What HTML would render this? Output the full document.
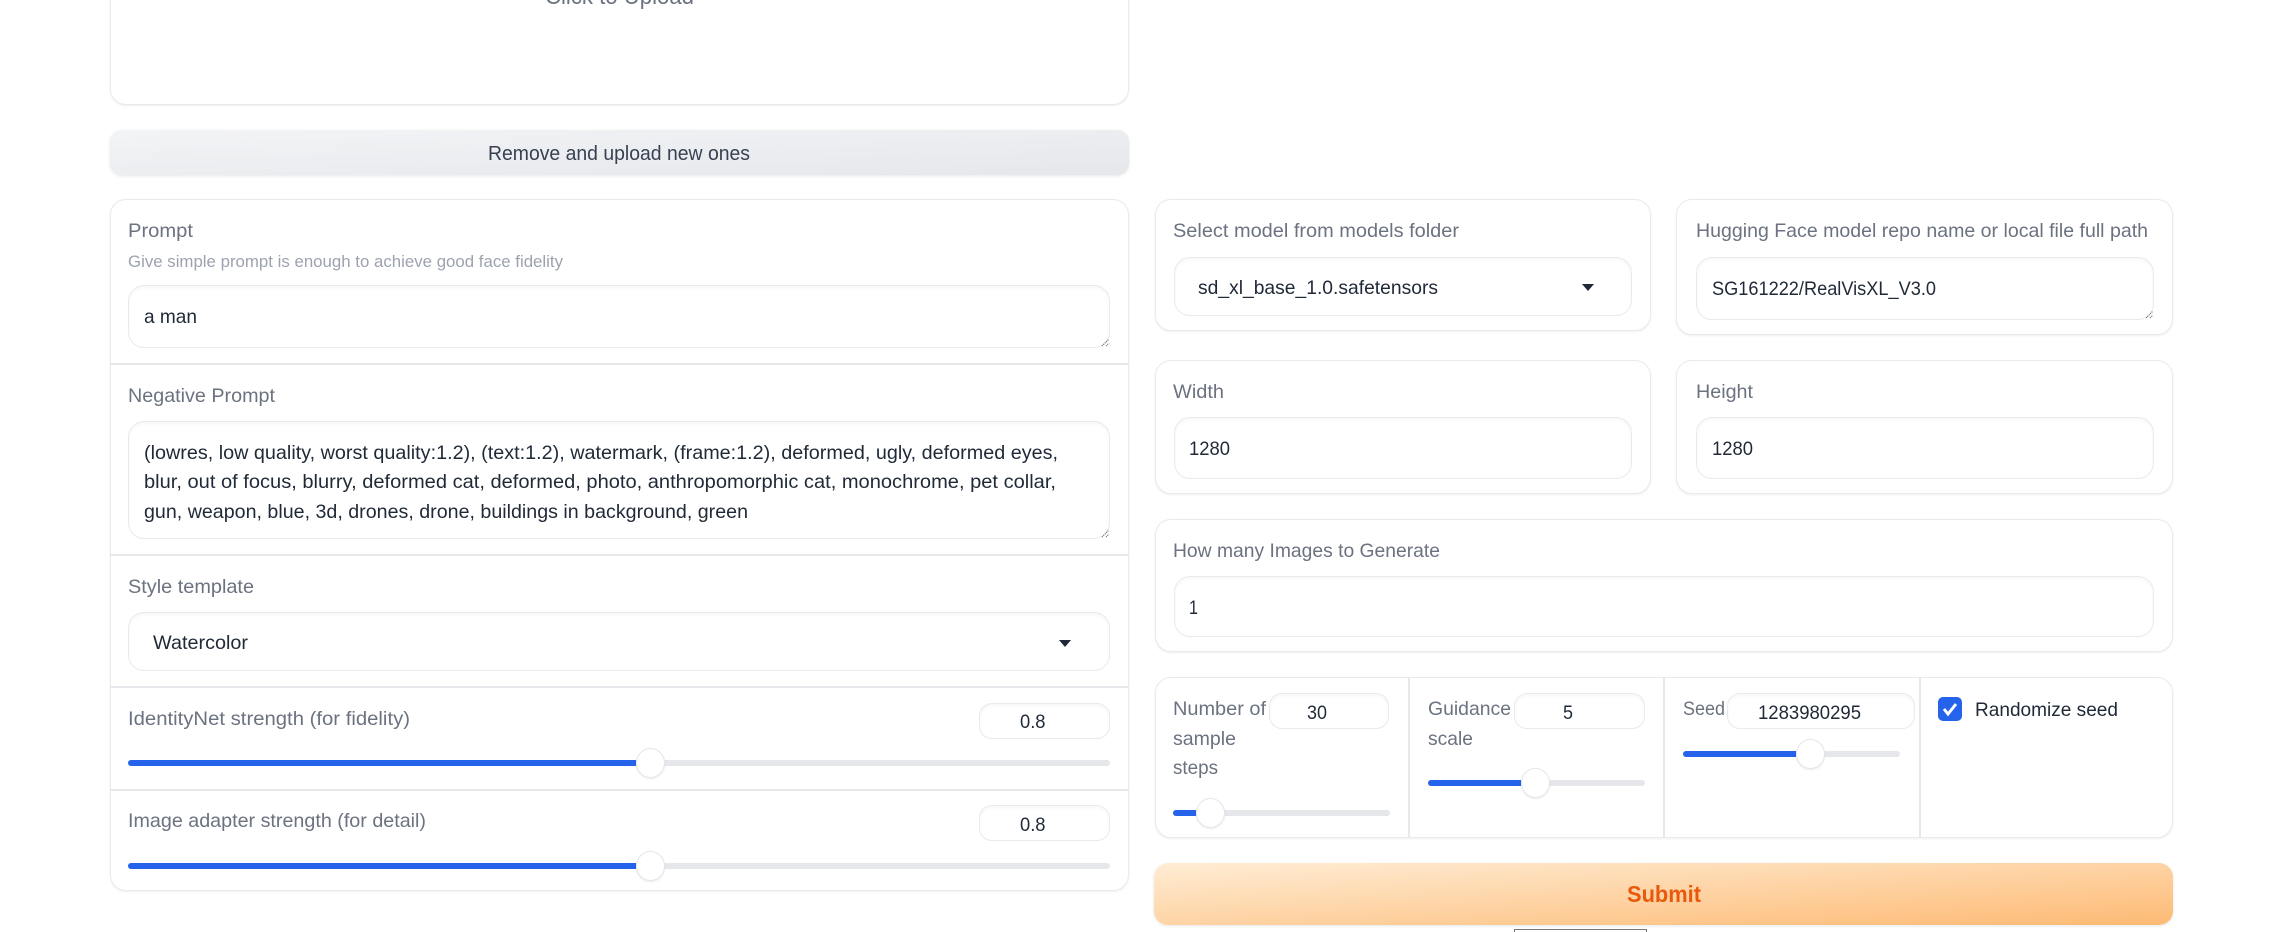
<!DOCTYPE html>
<html><head><meta charset="utf-8"><title>Recreation</title>
<style>
html,body{margin:0;padding:0;background:#fff;width:2279px;height:932px;overflow:hidden}
.a{position:absolute;box-sizing:border-box}
.card{border:1.5px solid #e9eaee;border-radius:16px;background:#fff;box-shadow:0 1px 2px rgba(0,0,0,.07)}
.in{border:1.5px solid #e9eaee;border-radius:16px;background:#fff;box-shadow:inset 0 2px 3px rgba(0,0,0,.035)}
.num{border-radius:13px}
.div{background:#e7e8ec}
.tr{background:#e5e7eb;border-radius:4px;height:6px}
.fl{background:#2563eb;border-radius:4px 0 0 4px;height:6px}
.th{width:29px;height:30px;border-radius:50%;background:#fff;border:1.5px solid #e5e7eb;box-shadow:0 1px 2px rgba(0,0,0,.08)}
svg.t{position:absolute;left:0;top:0}
svg.t text{font-family:"Liberation Sans",sans-serif;font-size:19.5px}
.l{fill:#6b7280}.v{fill:#1f2937}
</style></head><body>
<div class="a card" style="left:110px;top:-60px;width:1019px;height:165px"></div>
<div class="a" style="left:110px;top:130px;width:1019px;height:45px;border-radius:12px;background:linear-gradient(to bottom right,#f3f4f6,#e5e7eb);box-shadow:0 1px 3px rgba(0,0,0,.1)"></div>

<div class="a card" style="left:110px;top:199px;width:1019px;height:692px"></div>
<div class="a div" style="left:110px;top:363px;width:1019px;height:2px"></div>
<div class="a div" style="left:110px;top:554px;width:1019px;height:2px"></div>
<div class="a div" style="left:110px;top:686px;width:1019px;height:2px"></div>
<div class="a div" style="left:110px;top:789px;width:1019px;height:1.5px"></div>

<div class="a in" style="left:128px;top:285px;width:982px;height:63px"></div>
<div class="a in" style="left:128px;top:421px;width:982px;height:118px"></div>
<div class="a in" style="left:128px;top:612px;width:982px;height:59px"></div>
<div class="a in num" style="left:979px;top:703px;width:131px;height:36px"></div>
<div class="a in num" style="left:979px;top:805px;width:131px;height:36px"></div>

<div class="a tr" style="left:128px;top:760px;width:982px"></div>
<div class="a fl" style="left:128px;top:760px;width:508px"></div>
<div class="a th" style="left:636px;top:748px"></div>
<div class="a tr" style="left:128px;top:863px;width:982px"></div>
<div class="a fl" style="left:128px;top:863px;width:508px"></div>
<div class="a th" style="left:636px;top:851px"></div>

<div class="a card" style="left:1155px;top:199px;width:496px;height:132px"></div>
<div class="a card" style="left:1676px;top:199px;width:497px;height:136px"></div>
<div class="a in" style="left:1174px;top:257px;width:458px;height:59px"></div>
<div class="a in" style="left:1696px;top:257px;width:458px;height:63px"></div>

<div class="a card" style="left:1155px;top:360px;width:496px;height:134px"></div>
<div class="a card" style="left:1676px;top:360px;width:497px;height:134px"></div>
<div class="a in" style="left:1174px;top:417px;width:458px;height:62px"></div>
<div class="a in" style="left:1696px;top:417px;width:458px;height:62px"></div>

<div class="a card" style="left:1155px;top:519px;width:1018px;height:133px"></div>
<div class="a in" style="left:1174px;top:576px;width:980px;height:61px"></div>

<div class="a card" style="left:1155px;top:677px;width:1018px;height:161px"></div>
<div class="a div" style="left:1408px;top:678px;width:1.5px;height:159px"></div>
<div class="a div" style="left:1663px;top:678px;width:1.5px;height:159px"></div>
<div class="a div" style="left:1919px;top:678px;width:1.5px;height:159px"></div>

<div class="a in num" style="left:1269px;top:693px;width:120px;height:36px"></div>
<div class="a in num" style="left:1514px;top:693px;width:131px;height:36px"></div>
<div class="a in num" style="left:1727px;top:693px;width:188px;height:36px"></div>

<div class="a tr" style="left:1173px;top:810px;width:217px"></div>
<div class="a fl" style="left:1173px;top:810px;width:23px"></div>
<div class="a th" style="left:1196px;top:798px"></div>
<div class="a tr" style="left:1428px;top:780px;width:217px"></div>
<div class="a fl" style="left:1428px;top:780px;width:93px"></div>
<div class="a th" style="left:1521px;top:768px"></div>
<div class="a tr" style="left:1683px;top:751px;width:217px"></div>
<div class="a fl" style="left:1683px;top:751px;width:113px"></div>
<div class="a th" style="left:1796px;top:739px"></div>

<div class="a" style="left:1938px;top:697px;width:24px;height:24px;border-radius:5px;background:#2563eb"></div>

<div class="a" style="left:1154px;top:863px;width:1019px;height:62px;border-radius:14px;background:linear-gradient(to bottom right,#ffedd5,#fdba74);box-shadow:0 1px 3px rgba(0,0,0,.1)"></div>
<div class="a" style="left:1514px;top:929px;width:133px;height:3px;border:1.5px solid #777;border-bottom:0;background:#fff"></div>

<svg class="t" width="2279" height="932" viewBox="0 0 2279 932" xmlns="http://www.w3.org/2000/svg">
<g fill="none" stroke="#555" stroke-width="1" stroke-dasharray="1 1">
<path d="M1102 346l7-7M1106 346l3-3"/>
<path d="M1102 537l7-7M1106 537l3-3"/>
<path d="M2146 318l7-7M2150 318l3-3"/>
</g>
<path d="M1059 640h12l-6 7z" fill="#1f2937"/>
<path d="M1582 284h12l-6 7z" fill="#1f2937"/>
<path d="M1944 709l4 5 8-10" fill="none" stroke="#fff" stroke-width="3"/>
<g>
<text class="l" x="545" y="4" textLength="149" lengthAdjust="spacingAndGlyphs" style="font-size:23px">Click to Upload</text>
<text x="488" y="160" textLength="262" lengthAdjust="spacingAndGlyphs" style="fill:#374151;font-size:20px">Remove and upload new ones</text>
<text class="l" x="128" y="237" textLength="65" lengthAdjust="spacingAndGlyphs">Prompt</text>
<text x="128" y="267" textLength="435" lengthAdjust="spacingAndGlyphs" style="fill:#9ca3af;font-size:17px">Give simple prompt is enough to achieve good face fidelity</text>
<text class="v" x="144" y="323" textLength="53" lengthAdjust="spacingAndGlyphs">a man</text>
<text class="l" x="128" y="402" textLength="147" lengthAdjust="spacingAndGlyphs">Negative Prompt</text>
<text class="v" x="144" y="459" textLength="914" lengthAdjust="spacingAndGlyphs">(lowres, low quality, worst quality:1.2), (text:1.2), watermark, (frame:1.2), deformed, ugly, deformed eyes,</text>
<text class="v" x="144" y="488" textLength="912" lengthAdjust="spacingAndGlyphs">blur, out of focus, blurry, deformed cat, deformed, photo, anthropomorphic cat, monochrome, pet collar,</text>
<text class="v" x="144" y="518" textLength="604" lengthAdjust="spacingAndGlyphs">gun, weapon, blue, 3d, drones, drone, buildings in background, green</text>
<text class="l" x="128" y="593" textLength="126" lengthAdjust="spacingAndGlyphs">Style template</text>
<text class="v" x="153" y="649" textLength="95" lengthAdjust="spacingAndGlyphs">Watercolor</text>
<text class="l" x="128" y="725" textLength="282" lengthAdjust="spacingAndGlyphs">IdentityNet strength (for fidelity)</text>
<text class="v" x="1020" y="728" textLength="25.5" lengthAdjust="spacingAndGlyphs">0.8</text>
<text class="l" x="128" y="827" textLength="298" lengthAdjust="spacingAndGlyphs">Image adapter strength (for detail)</text>
<text class="v" x="1020" y="831" textLength="25.5" lengthAdjust="spacingAndGlyphs">0.8</text>
<text class="l" x="1173" y="237" textLength="286" lengthAdjust="spacingAndGlyphs">Select model from models folder</text>
<text class="l" x="1696" y="237" textLength="452" lengthAdjust="spacingAndGlyphs">Hugging Face model repo name or local file full path</text>
<text class="v" x="1198" y="294" textLength="240" lengthAdjust="spacingAndGlyphs">sd_xl_base_1.0.safetensors</text>
<text class="v" x="1712" y="295" textLength="224" lengthAdjust="spacingAndGlyphs">SG161222/RealVisXL_V3.0</text>
<text class="l" x="1173" y="398" textLength="51" lengthAdjust="spacingAndGlyphs">Width</text>
<text class="l" x="1696" y="398" textLength="57" lengthAdjust="spacingAndGlyphs">Height</text>
<text class="v" x="1189" y="455" textLength="41" lengthAdjust="spacingAndGlyphs">1280</text>
<text class="v" x="1712" y="455" textLength="41" lengthAdjust="spacingAndGlyphs">1280</text>
<text class="l" x="1173" y="557" textLength="267" lengthAdjust="spacingAndGlyphs">How many Images to Generate</text>
<text class="v" x="1189" y="614" textLength="9" lengthAdjust="spacingAndGlyphs">1</text>
<text class="l" x="1173" y="715" textLength="93" lengthAdjust="spacingAndGlyphs">Number of</text>
<text class="l" x="1173" y="745" textLength="63" lengthAdjust="spacingAndGlyphs">sample</text>
<text class="l" x="1173" y="774" textLength="45" lengthAdjust="spacingAndGlyphs">steps</text>
<text class="v" x="1307" y="719" textLength="20" lengthAdjust="spacingAndGlyphs">30</text>
<text class="l" x="1428" y="715" textLength="83" lengthAdjust="spacingAndGlyphs">Guidance</text>
<text class="l" x="1428" y="745" textLength="45" lengthAdjust="spacingAndGlyphs">scale</text>
<text class="v" x="1563" y="719" textLength="10" lengthAdjust="spacingAndGlyphs">5</text>
<text class="l" x="1683" y="715" textLength="42" lengthAdjust="spacingAndGlyphs">Seed</text>
<text class="v" x="1758" y="719" textLength="103" lengthAdjust="spacingAndGlyphs">1283980295</text>
<text class="v" x="1975" y="716" textLength="143" lengthAdjust="spacingAndGlyphs">Randomize seed</text>
<text x="1627" y="902" textLength="74" lengthAdjust="spacingAndGlyphs" style="fill:#ea580c;font-size:23px;font-weight:600">Submit</text>
</g>
</svg>
</body></html>
